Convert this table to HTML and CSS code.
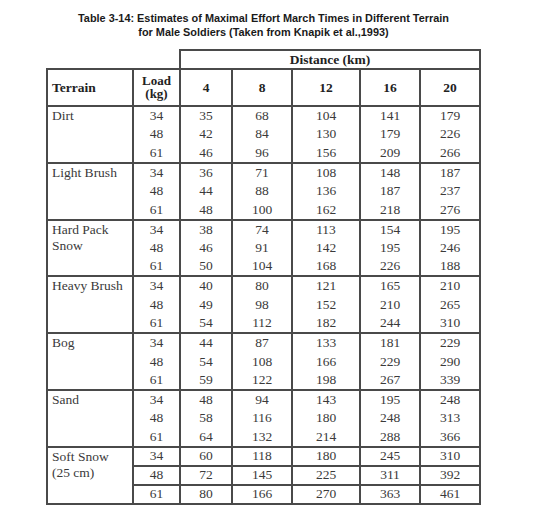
FILE: index.html
```html
<!DOCTYPE html>
<html>
<head>
<meta charset="utf-8">
<link rel="stylesheet" href="styles.css">
</head>
<body>
<div class="page">
  <div class="title">Table 3-14: Estimates of Maximal Effort March Times in Different Terrain<br>for Male Soldiers (Taken from Knapik et al.,1993)</div>
  <table class="tbl">
    <colgroup>
      <col class="c-ter"><col class="c-load"><col class="c-4"><col class="c-8"><col class="c-12"><col class="c-16"><col class="c-20">
    </colgroup>
    <tr class="r-dist">
      <td class="blank"></td><td class="blank"></td>
      <th colspan="5" class="dist">Distance (km)</th>
    </tr>
    <tr class="r-head">
      <th class="ter">Terrain</th>
      <th class="load">Load<br>(kg)</th>
      <th>4</th><th>8</th><th>12</th><th>16</th><th>20</th>
    </tr>
    <tr class="g"><td rowspan="3" class="ter">Dirt</td><td>34</td><td>35</td><td>68</td><td>104</td><td>141</td><td>179</td></tr>
    <tr><td>48</td><td>42</td><td>84</td><td>130</td><td>179</td><td>226</td></tr>
    <tr><td>61</td><td>46</td><td>96</td><td>156</td><td>209</td><td>266</td></tr>
    <tr class="g"><td rowspan="3" class="ter">Light Brush</td><td>34</td><td>36</td><td>71</td><td>108</td><td>148</td><td>187</td></tr>
    <tr><td>48</td><td>44</td><td>88</td><td>136</td><td>187</td><td>237</td></tr>
    <tr><td>61</td><td>48</td><td>100</td><td>162</td><td>218</td><td>276</td></tr>
    <tr class="g"><td rowspan="3" class="ter">Hard Pack<br>Snow</td><td>34</td><td>38</td><td>74</td><td>113</td><td>154</td><td>195</td></tr>
    <tr><td>48</td><td>46</td><td>91</td><td>142</td><td>195</td><td>246</td></tr>
    <tr><td>61</td><td>50</td><td>104</td><td>168</td><td>226</td><td>188</td></tr>
    <tr class="g"><td rowspan="3" class="ter">Heavy Brush</td><td>34</td><td>40</td><td>80</td><td>121</td><td>165</td><td>210</td></tr>
    <tr><td>48</td><td>49</td><td>98</td><td>152</td><td>210</td><td>265</td></tr>
    <tr><td>61</td><td>54</td><td>112</td><td>182</td><td>244</td><td>310</td></tr>
    <tr class="g"><td rowspan="3" class="ter">Bog</td><td>34</td><td>44</td><td>87</td><td>133</td><td>181</td><td>229</td></tr>
    <tr><td>48</td><td>54</td><td>108</td><td>166</td><td>229</td><td>290</td></tr>
    <tr><td>61</td><td>59</td><td>122</td><td>198</td><td>267</td><td>339</td></tr>
    <tr class="g"><td rowspan="3" class="ter">Sand</td><td>34</td><td>48</td><td>94</td><td>143</td><td>195</td><td>248</td></tr>
    <tr><td>48</td><td>58</td><td>116</td><td>180</td><td>248</td><td>313</td></tr>
    <tr><td>61</td><td>64</td><td>132</td><td>214</td><td>288</td><td>366</td></tr>
    <tr class="g last"><td rowspan="3" class="ter">Soft Snow<br>(25 cm)</td><td>34</td><td>60</td><td>118</td><td>180</td><td>245</td><td>310</td></tr>
    <tr class="last"><td>48</td><td>72</td><td>145</td><td>225</td><td>311</td><td>392</td></tr>
    <tr class="last"><td>61</td><td>80</td><td>166</td><td>270</td><td>363</td><td>461</td></tr>
  </table>
</div>
</body>
</html>
```

FILE: styles.css
```css
html, body {
  margin: 0;
  padding: 0;
  background: #ffffff;
}
.page {
  padding: 12px 0 0 46px;
  width: 435px;
}
.title {
  font-family: "Liberation Sans", Arial, sans-serif;
  font-weight: bold;
  font-size: 10.9px;
  line-height: 13.5px;
  color: #1a1a1a;
  text-align: center;
  width: 435px;
}
.tbl {
  margin-top: 10px;
  border-collapse: collapse;
  table-layout: fixed;
  width: 435px;
  font-family: "Liberation Serif", "Times New Roman", serif;
  font-size: 13.5px;
  color: #3a3a3a;
}
.c-ter { width: 86px; }
.c-load { width: 47px; }
.c-4 { width: 52px; }
.c-8 { width: 60px; }
.c-12 { width: 68px; }
.c-16 { width: 60px; }
.c-20 { width: 60px; }
.tbl td, .tbl th {
  border-left: 2px solid #4a4a4a;
  border-right: 2px solid #4a4a4a;
  padding: 0;
  text-align: center;
  line-height: 16px;
}
.tbl th {
  font-weight: bold;
  color: #222;
}
.tbl td.blank {
  border: none;
}
.tbl tr {
  height: 18.95px;
}
.tbl tr.r-dist {
  height: 19px;
}
.tbl th.dist {
  border-top: 2px solid #4a4a4a;
  border-bottom: 2px solid #4a4a4a;
}
.tbl tr.r-head {
  height: 37px;
}
.r-head th {
  border-top: 2px solid #4a4a4a;
  border-bottom: 2px solid #4a4a4a;
  line-height: 13.5px;
}
.r-head th.load {
  font-size: 13px;
  padding-bottom: 1px;
}
.tbl .ter {
  text-align: left;
  padding-left: 4px;
}
.tbl td.ter {
  vertical-align: top;
  line-height: 16.5px;
  padding-top: 1px;
}
.tbl tr.g td {
  border-top: 2px solid #4a4a4a;
}
.tbl tr.last td {
  border-bottom: 2px solid #4a4a4a;
}
```
